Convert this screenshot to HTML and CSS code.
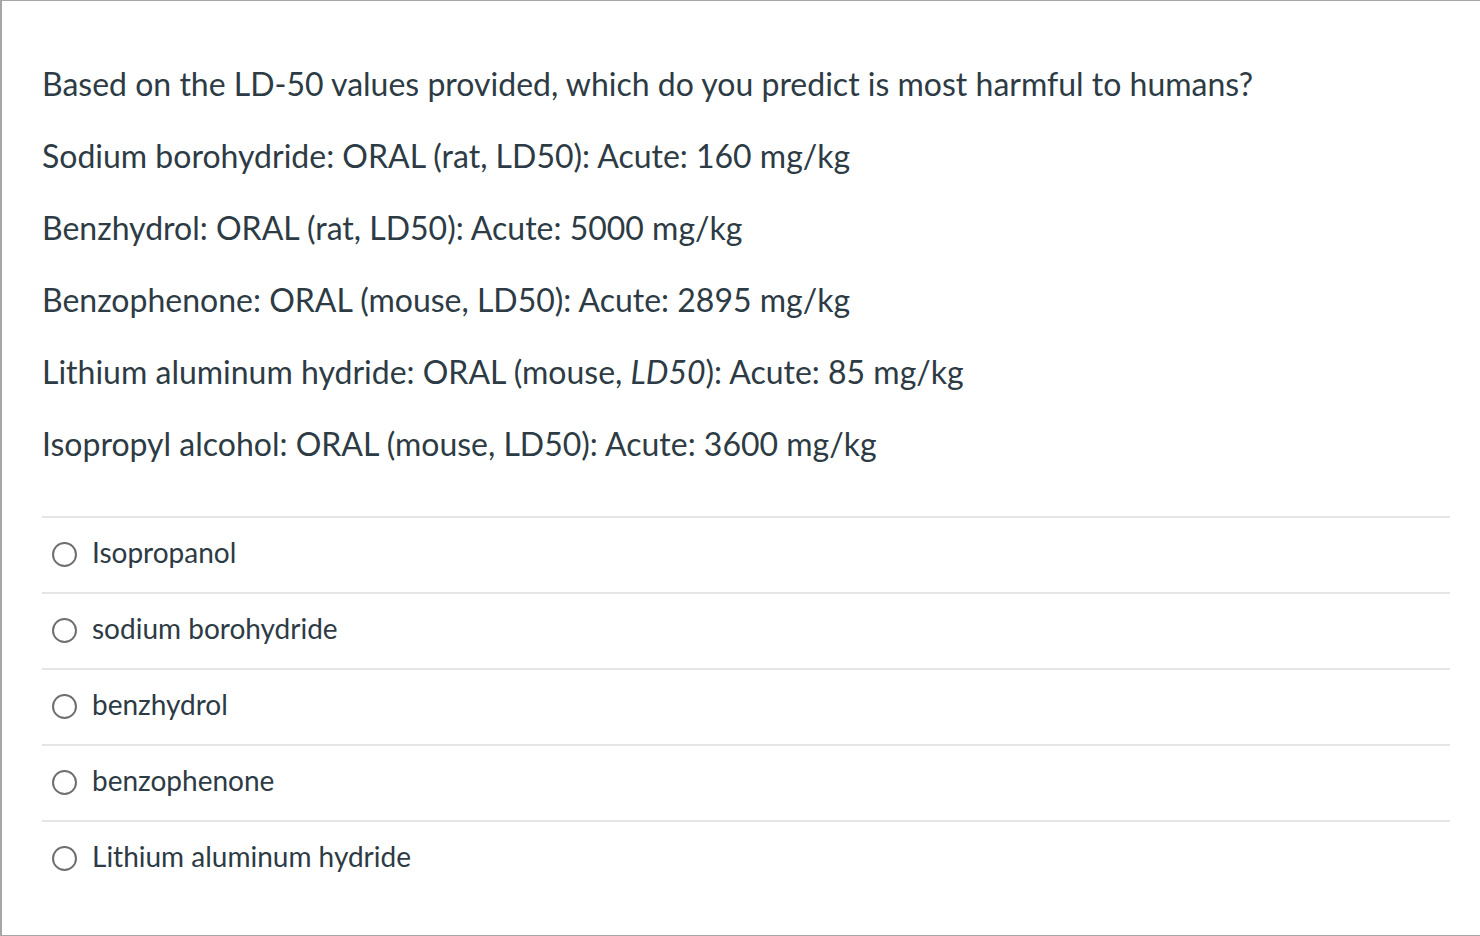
FILE: index.html
```html
<!DOCTYPE html>
<html lang="en">
<head>
<meta charset="utf-8">
<title>Quiz question</title>
<link rel="stylesheet" href="styles.css">
</head>
<body>
<div class="frame">
  <div class="question">
    <div class="text">
      <p>Based on the LD-50 values provided, which do you predict is most harmful to humans?</p>
      <p>Sodium borohydride: ORAL (rat, LD50): Acute: 160 mg/kg</p>
      <p>Benzhydrol: ORAL (rat, LD50): Acute: 5000 mg/kg</p>
      <p>Benzophenone: ORAL (mouse, LD50): Acute: 2895 mg/kg</p>
      <p>Lithium aluminum hydride: ORAL (mouse, <em>LD50</em>): Acute: 85 mg/kg</p>
      <p>Isopropyl alcohol: ORAL (mouse, LD50): Acute: 3600 mg/kg</p>
    </div>
    <div class="answers">
      <label class="answer"><span class="radio"></span><span class="label">Isopropanol</span></label>
      <label class="answer"><span class="radio"></span><span class="label">sodium borohydride</span></label>
      <label class="answer"><span class="radio"></span><span class="label">benzhydrol</span></label>
      <label class="answer"><span class="radio"></span><span class="label">benzophenone</span></label>
      <label class="answer"><span class="radio"></span><span class="label">Lithium aluminum hydride</span></label>
    </div>
  </div>
</div>
</body>
</html>
```

FILE: styles.css
```css
html, body {
  margin: 0;
  padding: 0;
  background: #ffffff;
}
body {
  font-family: Lato, "Liberation Sans", sans-serif;
  color: #2d3b45;
}
.frame {
  box-sizing: border-box;
  width: 1480px;
  height: 936px;
  border-top: 1px solid #a6a6a6;
  border-left: 2px solid #a6a6a6;
  border-bottom: 1px solid #a6a6a6;
  overflow: hidden;
}
.question {
  padding: 61px 30px 0 40px;
}
.text p {
  margin: 0 0 29px 0;
  font-size: 32px;
  line-height: 43px;
}
.text em {
  font-style: italic;
}
.answers {
  margin-top: 51px;
}
.answer {
  box-sizing: border-box;
  display: flex;
  align-items: center;
  height: 76px;
  padding-bottom: 6px;
  border-top: 2px solid #e3e5e7;
}
.radio {
  box-sizing: border-box;
  width: 25px;
  height: 25px;
  border: 2px solid #6f6f6f;
  border-radius: 50%;
  margin: 5px 15px 0 10px;
  flex: none;
}
.label {
  font-size: 28px;
  line-height: 36px;
}
```
